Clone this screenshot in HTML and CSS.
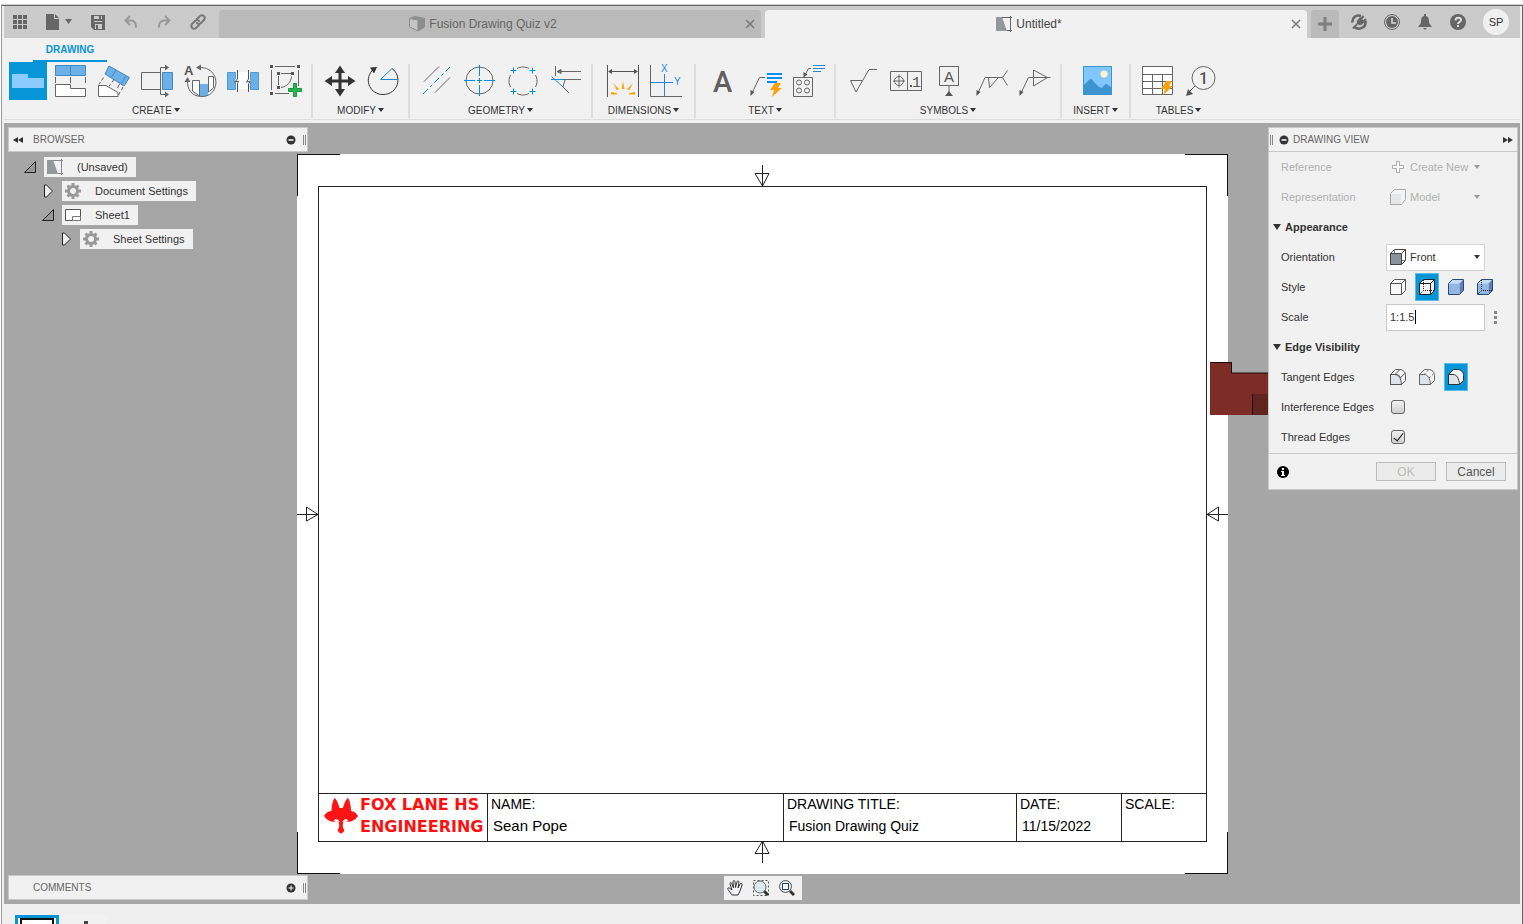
FILE: index.html
```html
<!DOCTYPE html>
<html lang="en">
<head>
    <meta charset="UTF-8">
    <meta name="viewport" content="width=device-width, initial-scale=1.0">
    <title>Untitled*</title>
    <link rel="stylesheet" href="styles.css">
</head>
<body>
<div class="app">

    <header class="title-bar">
        <div class="quick-access">
            <button class="plain" aria-label="Data panel"><svg width="14" height="14" viewBox="0 0 14 14" fill="#666"><path d="M0 0h4v4H0zM5 0h4v4H5zM10 0h4v4h-4zM0 5h4v4H0zM5 5h4v4H5zM10 5h4v4h-4zM0 10h4v4H0zM5 10h4v4H5zM10 10h4v4h-4z"/></svg></button>
            <button class="plain" aria-label="File"><svg width="26" height="16" viewBox="0 0 26 16" fill="#666"><path d="M0 0h8v5h5v11H0zM9 0l4 4H9zM19 5h7l-3.500 5z"/></svg></button>
            <button class="plain" aria-label="Save"><svg width="14" height="15" viewBox="0 0 14 15"><path fill="#666" d="M0 0h14v15H3l-3-3z"/><path fill="#cbcbcb" d="M3 1h8v6H3zM4 9h7v5H4z"/><path fill="#666" d="M8 1h2v3H8zM3 4h8v2H3zM5 10h2v4H5z"/></svg></button>
            <button class="plain" aria-label="Undo"><svg width="14" height="14" viewBox="0 0 14 14" fill="none" stroke="#999" stroke-width="2"><path d="M6 1L1.500 5.500L6 10M2 5.500h5c4 0 5 3 5 7"/></svg></button>
            <button class="plain" aria-label="Redo"><svg width="14" height="14" viewBox="0 0 14 14" fill="none" stroke="#999" stroke-width="2"><path d="M8 1l4.500 4.500L8 10M12 5.500H7c-4 0-5 3-5 7"/></svg></button>
            <button class="plain" aria-label="Link"><svg width="16" height="16" viewBox="0 0 16 16" fill="none" stroke="#777" stroke-width="2" stroke-linecap="round"><path d="M7 5l3-3c3-2 6 1 4 4l-3 3c-1 1-3 1-4 0M9 11l-3 3c-3 2-6-1-4-4l3-3c1-1 3-1 4 0"/></svg></button>
        </div>
        <div class="tabs">
            <div class="tab">
                <svg width="16" height="16" viewBox="0 0 16 16"><path fill="#8d8d8d" d="M0 2L6 0l10 2-6 2z"/><path fill="#c4c4c4" stroke="#8d8d8d" d="M.5 2.500L9 4v11L.500 11z"/><path fill="#8d8d8d" d="M9 4l7-2v9l-7 4.500z"/></svg>
                <span>Fusion Drawing Quiz v2</span>
                <button class="plain close" aria-label="Close tab"><svg width="10" height="10" viewBox="0 0 10 10" stroke="#777" stroke-width="1.500"><path d="M1 1l8 8M9 1l-8 8"/></svg></button>
            </div>
            <div class="tab active">
                <svg width="16" height="16" viewBox="0 0 16 16"><path fill="#94979c" d="M0 1h6l5 14H0z"/><path fill="none" stroke="#666" d="M6 1.500h10M14.500 0v16M11 14.500h5"/></svg>
                <span>Untitled*</span>
                <button class="plain close" aria-label="Close tab"><svg width="10" height="10" viewBox="0 0 10 10" stroke="#777" stroke-width="1.500"><path d="M1 1l8 8M9 1l-8 8"/></svg></button>
            </div>
        </div>
        <div class="account">
            <button class="plain new-tab" aria-label="New tab"><svg width="14" height="14" viewBox="0 0 14 14" stroke="#7e7e7e" stroke-width="3"><path d="M0 7h14M7 0v14"/></svg></button>
            <button class="plain" aria-label="Extensions"><svg width="16" height="16" viewBox="0 0 16 16"><path fill="none" stroke="#666" stroke-width="2.500" d="M10 2C5 0 1 4 1.500 8.500M3.500 13c5 4 12 0 11-6"/><path fill="#666" d="M1 14l5-5 1 1-4 5zM6 7l3-4 5 5-4 3c-2 1-5-2-4-4z"/><path stroke="#666" stroke-width="2" d="M10 5l2.500-3M12 8l3-3"/></svg></button>
            <button class="plain" aria-label="Job status"><svg width="16" height="16" viewBox="0 0 16 16"><circle cx="8" cy="8" r="7.500" fill="none" stroke="#666"/><circle cx="8" cy="8" r="6" fill="#666"/><path d="M8 4v5h4" fill="none" stroke="#ddd" stroke-width="1.500"/></svg></button>
            <button class="plain" aria-label="Notifications"><svg width="16" height="16" viewBox="0 0 16 16" fill="#666"><path d="M7 0h2v2c3 1 3 4 3 6 0 2 2 3 3 5H1c1-2 3-3 3-5 0-2 0-5 3-6zM6 14h4l-2 2z"/></svg></button>
            <button class="plain" aria-label="Help"><svg width="16" height="16" viewBox="0 0 16 16"><circle cx="8" cy="8" r="8" fill="#666"/><path d="M5.500 6.500c0-4 5.500-3.500 5.500-.5 0 2-3 2-3 4M8 11v2" fill="none" stroke="#ddd" stroke-width="2"/></svg></button>
            <button class="plain avatar">SP</button>
        </div>
    </header>

    <nav class="ribbon">
        <a class="ribbon-tab" href="#">DRAWING</a>
        <div class="groups">

            <div class="group">
                <div class="tools">
                    <button class="tool selected" aria-label="Base view"><svg viewBox="0 0 38 38"><path fill="#8ccbff" d="M3 12h16v4h16v10H3z"/></svg></button>
                    <button class="tool" aria-label="Projected view"><svg viewBox="0 0 38 38"><path fill="#6bb1e8" stroke="#4489c0" d="M3.500 3.500h30v10h-30zM18.500 3.500v10"/><path stroke="#666" d="M3.500 15v6M18.500 15v6M33.500 15v6"/><path fill="#fff" stroke="#666" d="M3.500 22.500h15v4h15v8h-30z"/></svg></button>
                    <button class="tool" aria-label="Auxiliary view"><svg viewBox="0 0 38 38"><path fill="#6bb1e8" stroke="#4489c0" d="M14 4l20.500 11.500-5.500 8.500-19-12zM21 8l-5 8M31 14l-5 8"/><path stroke="#666" d="M8.500 15.500l-2 3M5.500 20l-1.500 2.500M19 17l-2 3.500M15.500 22l-1.500 2.500M28 25l-1.500 3M25 30l-1.500 3M24.500 22l-2 4"/><path fill="#fff" stroke="#666" d="M3.500 23.500H11l12 7v4H3.500z"/></svg></button>
                    <button class="tool" aria-label="Section view"><svg viewBox="0 0 38 38"><path fill="#6bb1e8" stroke="#4489c0" d="M24.500 10.500h10v17h-10z"/><path fill="none" stroke="#666" d="M22.500 10.500h-19v17h19M30 5.500h-7.500v27H30"/><path fill="#666" d="M27 2.500l4 3-4 3zM27 29.500l4 3-4 3z"/></svg></button>
                    <button class="tool" aria-label="Detail view"><svg viewBox="0 0 38 38"><path fill="#fff" stroke="#666" d="M11.500 29V18.500h7V34zM27.500 30V14.500h5V26z"/><path fill="#6bb1e8" d="M19 22h8v12h-8z"/><path fill="none" stroke="#666" d="M18 5.500c22-1 22 29 3 29C10 34.500 6 27 6.500 18"/><path fill="#666" d="M20 2.500v6l-5-3zM3.500 20h6l-3-5z"/><text class="svg-bold" x="3" y="13" font-size="13" fill="#555">A</text></svg></button>
                    <button class="tool" aria-label="Break view"><svg viewBox="0 0 38 38"><path fill="#fff" d="M12 10h14v17H12z"/><path fill="#6bb1e8" stroke="#4f9bd5" d="M3.500 10.500h8v6l-2 3 2 1v7h-8zM26.500 10.500h8v17h-8v-7l1.500-2-1.500-1z"/><path fill="none" stroke="#555" d="M13.500 8v9l-3 3 4-1-1 2.500V30M24.500 8v9l-2 3 4-1-2 3v8"/></svg></button>
                    <button class="tool" aria-label="Create sketch"><svg viewBox="0 0 38 38"><path fill="none" stroke="#666" d="M8 4.500h20M4.500 8v20M31.500 8v16M8 31.500h14M14 11.500h10M11.500 14v9M14 25.500c6-1 10-5 10.500-11"/><path fill="#555" d="M3 3h3v3H3zM30 3h3v3h-3zM3 30h3v3H3zM10 10h3v3h-3zM24 10h3v3h-3zM10 24h3v3h-3z"/><path fill="#27b34f" stroke="#159a3c" d="M26.500 21.500h3v5h5v3h-5v5h-3v-5h-5v-3h5z"/></svg></button>
                </div>
                <button class="group-label">CREATE <span class="caret"></span></button>
            </div>

            <div class="group">
                <div class="tools">
                    <button class="tool" aria-label="Move"><svg viewBox="0 0 38 38"><path stroke="#333" stroke-width="3" d="M19 8v22M8 19h22"/><path fill="#333" d="M19 3.500l5 7.500H14zM19 34.500l5-7.500H14zM3.500 19l7.500-5v10zM34.500 19L27 14v10z"/></svg></button>
                    <button class="tool" aria-label="Rotate"><svg viewBox="0 0 38 38"><path fill="none" stroke="#333" d="M8.500 8C-1 19 7 32.500 19 32.500c15 0 20-18 9-26"/><path fill="#333" d="M6 5.500l7-.5-3 6.500z"/><path fill="none" stroke="#1e88d8" d="M28 6.500l-11.500 11h17"/></svg></button>
                </div>
                <button class="group-label">MODIFY <span class="caret"></span></button>
            </div>

            <div class="group">
                <div class="tools">
                    <button class="tool" aria-label="Centerline"><svg viewBox="0 0 38 38" fill="none" stroke="#666"><path d="M6 19.500l15-15M17 30.500l15-15"/><path stroke="#0090e8" stroke-dasharray="7 3 3 3" d="M5 32L32 5"/></svg></button>
                    <button class="tool" aria-label="Center mark"><svg viewBox="0 0 38 38" fill="none" stroke="#666"><circle cx="18.500" cy="18.500" r="13.500"/><path stroke="#0090e8" d="M3 18.500h11M16 18.500h5M23 18.500h11M18.500 3v11M18.500 16v5M18.500 23v11"/></svg></button>
                    <button class="tool" aria-label="Center mark pattern"><svg viewBox="0 0 38 38" fill="none" stroke="#666"><path d="M13 6.500c4-2 8-2 12 0M13 31.500c4 2 8 2 12 0M6.500 13c-2 4-2 8 0 12M31.500 13c2 4 2 8 0 12"/><path stroke="#0090e8" d="M6.500 8.500h6M9.500 5.500v6M25.500 8.500h6M28.500 5.500v6M6.500 29.500h6M9.500 26.500v6M25.500 29.500h6M28.500 26.500v6"/></svg></button>
                    <button class="tool" aria-label="Edge extension"><svg viewBox="0 0 38 38" fill="none" stroke="#666"><path d="M8.500 4v10M10 9.500h24M16 17.500h18M16 25l6 6M18 18l-2 7"/><path fill="#666" d="M10 9.500l4-2v4z"/><path stroke="#1e88d8" d="M4 17.500h13M4.500 14.500L16 25"/></svg></button>
                </div>
                <button class="group-label">GEOMETRY <span class="caret"></span></button>
            </div>

            <div class="group group-dimensions">
                <div class="tools">
                    <button class="tool" aria-label="Dimension"><svg viewBox="0 0 38 38"><path fill="none" stroke="#555" d="M3.500 3v32M34.500 3v32M5 9.500h28"/><path fill="#555" d="M4 9.500l4-2.500v5zM34 9.500l-4-2.500v5z"/><path fill="#fda50f" d="M19 19l1.500 8h-3zM9 21l6 6-2 1.500zM29 21l-6 6 2 1.500zM7 30l6 1v1.500H7zM31 30l-6 1v1.500h6z"/></svg></button>
                    <button class="tool" aria-label="Ordinate dimension"><svg viewBox="0 0 38 38"><path fill="none" stroke="#666" d="M3.500 3v31.500H35"/><path stroke="#1e88d8" d="M17.500 12v22M4 20.500h22"/><text x="14" y="10" font-size="10" fill="#1e88d8">X</text><text x="27" y="23" font-size="10" fill="#1e88d8">Y</text></svg></button>
                </div>
                <button class="group-label">DIMENSIONS <span class="caret"></span></button>
            </div>

            <div class="group">
                <div class="tools">
                    <button class="tool" aria-label="Text"><svg viewBox="0 0 38 38"><text class="svg-medium" x="9" y="30" font-size="29" fill="#606060">A</text></svg></button>
                    <button class="tool" aria-label="Leader note"><svg viewBox="0 0 38 38"><path fill="none" stroke="#666" d="M18 15.500h-5.500L5 31"/><path fill="#555" d="M3.500 34v-6l4 2z"/><path stroke="#0090f0" stroke-width="2" d="M20 12h15M20 16h15M20 20h10"/><path fill="#fba00d" d="M28 21h6l-3 5h4L25 35l2-7h-4z"/></svg></button>
                    <button class="tool" aria-label="Hole and thread note"><svg viewBox="0 0 38 38" fill="none" stroke="#666"><path d="M3.500 15.500h19v19h-19zM21 6.500h-2.500L15 13"/><circle cx="9" cy="20.500" r="2.500"/><circle cx="17" cy="20.500" r="2.500"/><circle cx="9" cy="28.500" r="2.500"/><circle cx="17" cy="28.500" r="2.500"/><path fill="#555" stroke="none" d="M13.500 15.500V10l4 2.500z"/><path stroke="#1e88d8" d="M23 3.500h12M23 6.500h12M23 9.500h8"/></svg></button>
                </div>
                <button class="group-label">TEXT <span class="caret"></span></button>
            </div>

            <div class="group">
                <div class="tools">
                    <button class="tool" aria-label="Surface texture"><svg viewBox="0 0 38 38" fill="none" stroke="#666"><path d="M18 18.500H6.500L12 30 25 7.500h8"/></svg></button>
                    <button class="tool" aria-label="Feature control frame"><svg viewBox="0 0 38 38" fill="none" stroke="#666"><path d="M3.500 9.500h31v19h-31zM20.500 9.500v19M6 19h12M12 12.500v13"/><circle cx="12" cy="19" r="4.500"/><path fill="#555" stroke="none" d="M23 23h2v2h-2z"/><text x="25" y="25" font-size="15" fill="#555" stroke="none" class="svg-mono">1</text></svg></button>
                    <button class="tool" aria-label="Datum identifier"><svg viewBox="0 0 38 38"><path fill="none" stroke="#666" d="M9.500 4.500h19v19h-19zM19 24v6"/><path fill="#555" d="M19 29l4 5h-8z"/><text x="14" y="20" font-size="15" fill="#555">A</text></svg></button>
                    <button class="tool" aria-label="Welding symbol"><svg viewBox="0 0 38 38" fill="none" stroke="#666"><path d="M5 31l7-15.500h17.500l5-7M29.500 15.500l5 8M15.500 15.500l1 10 9-10"/><path fill="#555" stroke="none" d="M3.500 34v-6l4 2z"/></svg></button>
                    <button class="tool" aria-label="Taper symbol"><svg viewBox="0 0 38 38" fill="none" stroke="#666"><path d="M5 31l7.500-15.500h22M17.500 8v16l14-8.500z"/><path fill="#555" stroke="none" d="M3.500 34v-6l4 2z"/></svg></button>
                </div>
                <button class="group-label">SYMBOLS <span class="caret"></span></button>
            </div>

            <div class="group group-insert">
                <div class="tools">
                    <button class="tool" aria-label="Insert image"><svg viewBox="0 0 38 38"><path fill="#80c7ff" d="M5 4h29v29H5z"/><path fill="#3d94cf" d="M5 24l6-6c2-2 3-1 5 2l5 5 3 1c3-4 4-5 6-3l4 3v7H5z"/><circle cx="26" cy="12" r="3.500" fill="#fdf6c8"/><path fill="none" stroke="#3d94cf" d="M5.500 4.500h28v28h-28z"/></svg></button>
                </div>
                <button class="group-label">INSERT <span class="caret"></span></button>
            </div>

            <div class="group">
                <div class="tools">
                    <button class="tool" aria-label="Table"><svg viewBox="0 0 38 38"><path fill="#fff" stroke="#666" d="M3.500 4.500h30v28h-30zM3.500 12.500h30M3.500 19.500h30M3.500 26.500h30M13.500 12v20M23.500 12v20"/><path fill="#fba00d" d="M27 19h6l-3 5h4L24 33l2-6h-4z"/></svg></button>
                    <button class="tool" aria-label="Balloon"><svg viewBox="0 0 38 38"><circle cx="21.500" cy="16" r="11.500" fill="none" stroke="#666"/><path stroke="#666" d="M13 24l-6 6"/><path fill="#555" d="M4 34l2-7 5 5z"/><text class="svg-medium" x="17" y="22" font-size="16" fill="#555">1</text></svg></button>
                </div>
                <button class="group-label">TABLES <span class="caret"></span></button>
            </div>
        </div>
    </nav>

    <main class="workspace">

        <aside class="sidebar">
            <section class="browser">
                <div class="panel-bar">
                    <svg width="10" height="8" viewBox="0 0 10 8" fill="#333"><path d="M5 1v6L0 4zM10 1v6L5 4z"/></svg>
                    <h2>BROWSER</h2>
                    <button class="plain" aria-label="Collapse"><svg width="10" height="10" viewBox="0 0 10 10"><circle cx="5" cy="5" r="4.500" fill="#333"/><path stroke="#fff" stroke-width="1.500" d="M2.500 5h5"/></svg></button>
                    <span class="grip"></span>
                </div>
                <ul class="tree">
                    <li>
                        <svg class="twist" viewBox="0 0 12 12"><path fill="#999" stroke="#222" d="M.5 11.500h11v-11z"/></svg>
                        <a class="node" href="#"><svg width="16" height="16" viewBox="0 0 16 16"><path fill="#94979c" d="M0 1h6l5 14H0z"/><path fill="none" stroke="#888" d="M6 1.500h10M14.500 0v16M11 14.500h5"/></svg><span>(Unsaved)</span></a>
                    </li>
                    <li class="level-2">
                        <svg class="twist" viewBox="0 0 12 12"><path fill="#eee" stroke="#222" d="M2.500 0v12h2l5.500-5.500v-1L4.500 0z"/></svg>
                        <a class="node" href="#"><svg width="16" height="16" viewBox="0 0 16 16"><circle cx="8" cy="8" r="4.500" fill="none" stroke="#999" stroke-width="3"/><path stroke="#999" stroke-width="3" d="M8 0v3M8 13v3M0 8h3M13 8h3M2.500 2.500l2 2M11.500 11.500l2 2M2.500 13.500l2-2M11.500 4.500l2-2"/></svg><span>Document Settings</span></a>
                    </li>
                    <li class="level-2">
                        <svg class="twist" viewBox="0 0 12 12"><path fill="#999" stroke="#222" d="M.5 11.500h11v-11z"/></svg>
                        <a class="node" href="#"><svg width="16" height="16" viewBox="0 0 16 16"><path fill="#fff" stroke="#555" d="M.5 2.500h15v11H.5z"/><path fill="#fff" stroke="#777" d="M7.500 9.500h8v4h-8z"/></svg><span>Sheet1</span></a>
                    </li>
                    <li class="level-3">
                        <svg class="twist" viewBox="0 0 12 12"><path fill="#eee" stroke="#222" d="M2.500 0v12h2l5.500-5.500v-1L4.500 0z"/></svg>
                        <a class="node" href="#"><svg width="16" height="16" viewBox="0 0 16 16"><circle cx="8" cy="8" r="4.500" fill="none" stroke="#999" stroke-width="3"/><path stroke="#999" stroke-width="3" d="M8 0v3M8 13v3M0 8h3M13 8h3M2.500 2.500l2 2M11.500 11.500l2 2M2.500 13.500l2-2M11.500 4.500l2-2"/></svg><span>Sheet Settings</span></a>
                    </li>
                </ul>
            </section>
            <section class="comments">
                <div class="panel-bar">
                    <h2 class="no-arrow">COMMENTS</h2>
                    <button class="plain" aria-label="Expand"><svg width="10" height="10" viewBox="0 0 10 10"><circle cx="5" cy="5" r="4.500" fill="#333"/><path stroke="#fff" d="M2.500 5h5M5 2.500v5"/></svg></button>
                    <span class="grip"></span>
                </div>
            </section>
        </aside>

        <div class="sheet">
            <span class="corner top-left"></span>
            <span class="corner top-right"></span>
            <span class="corner bottom-left"></span>
            <span class="corner bottom-right"></span>
            <svg class="mark mark-top" width="16" height="22" viewBox="0 0 16 22"><path d="M8.500 0v22M1 8.500h14L8.500 21z"/></svg>
            <svg class="mark mark-bottom" width="16" height="22" viewBox="0 0 16 22"><path d="M8.500 0v22M1 12.500h14L8.500 0z"/></svg>
            <svg class="mark mark-left" width="22" height="16" viewBox="0 0 22 16"><path d="M0 8.500h22M9.500 1v14L21 8.500z"/></svg>
            <svg class="mark mark-right" width="22" height="16" viewBox="0 0 22 16"><path d="M0 8.500h22M12.500 1v14L1 8.500z"/></svg>

            <div class="frame">
                <div class="drawing-area"></div>
                <div class="title-block">
                    <div class="logo">
                        <svg width="34" height="38" viewBox="0 0 34 38"><path fill="#fd1414" d="M10.500 1c2 1 4 6 5 10h3.500c1-4 3-9 5-10 2 3 3 8 3 13 3 0 6 3 7 5-3 5-9 7-14 5-1 1-1.500 3-1 7a3 3 0 1 1-4 0c.5-4 0-6-1-7-5 2-11 0-14-5 1-2 4-5 7.500-5 0-5 1-10 3-13z"/><path fill="#fff" d="M11 22c2 0 4 1 5 3-2-1-4 0-6-1zM23 22c-2 0-4 1-5 3 2-1 4 0 6-1z"/></svg>
                        <div class="logo-text">FOX LANE HS<br>ENGINEERING</div>
                    </div>
                    <div class="cell"><span>NAME:</span><span class="value name-value">Sean Pope</span></div>
                    <div class="cell"><span>DRAWING TITLE:</span><span class="value">Fusion Drawing Quiz</span></div>
                    <div class="cell"><span>DATE:</span><span class="value">11/15/2022</span></div>
                    <div class="cell"><span>SCALE:</span></div>
                </div>
            </div>

            <svg class="model" width="58" height="53" viewBox="0 0 58 53"><path fill="#7d2d28" d="M0 0h22v11h36v42H0z"/><path fill="#61241f" d="M42 32h16v21H42z"/><path fill="none" stroke="#1c0b0a" d="M0 .5h21.500v10.500H58M42.500 53V32"/></svg>
        </div>

        <aside class="side-right">
            <form class="dialog">
                <div class="dialog-bar">
                    <span class="grip"></span>
                    <svg width="10" height="10" viewBox="0 0 10 10"><circle cx="5" cy="5" r="4.500" fill="#333"/><path stroke="#fff" stroke-width="1.500" d="M2.500 5h5"/></svg>
                    <h2>DRAWING VIEW</h2>
                    <svg width="10" height="8" viewBox="0 0 10 8" fill="#333"><path d="M0 1v6l5-3zM5 1v6l5-3z"/></svg>
                </div>

                <div class="row disabled">
                    <label for="reference">Reference</label>
                    <div class="drop">
                        <svg class="drop-icon" viewBox="0 0 18 18"><path fill="#fff" stroke="#aaa" d="M7.500 3.500h3v4h4v3h-4v4h-3v-4h-4v-3h4z"/></svg>
                        <select id="reference" disabled><option>Create New</option></select><span class="caret"></span>
                    </div>
                </div>
                <div class="row disabled">
                    <label for="representation">Representation</label>
                    <div class="drop">
                        <svg class="drop-icon" viewBox="0 0 18 18"><path fill="#f4f4f4" stroke="#aaa" d="M1.500 5.500l4-4h11v10l-4 5h-11z"/><path fill="#e4e6e8" d="M2 6h10v10H2z"/></svg>
                        <select id="representation" disabled><option>Model</option></select><span class="caret"></span>
                    </div>
                </div>

                <h3 class="row"><span class="fold"></span>Appearance</h3>
                <div class="row">
                    <label for="orientation">Orientation</label>
                    <div class="drop boxed">
                        <svg class="drop-icon" viewBox="0 0 18 18"><path fill="#fff" stroke="#444" d="M1.500 5.500l4-4h11v11l-4 4h-11z"/><path fill="none" stroke="#777" d="M5.500 1.500v11h11"/><path fill="#8c929b" stroke="#444" d="M1.500 5.500h11v11h-11z"/><path stroke="#444" d="M12.500 5.500l4-4"/></svg>
                        <select id="orientation"><option>Front</option></select><span class="caret"></span>
                    </div>
                </div>
                <div class="row">
                    <span class="row-label">Style</span>
                    <div class="choices">
                        <button type="button" class="choice" aria-label="Visible edges"><svg viewBox="0 0 18 18" stroke="#555" fill="#f8f8f8"><path d="M1.500 5.500l4-4h11v11l-4 4h-11zM1.500 5.500h11v11M12.500 5.500l4-4"/></svg></button>
                        <button type="button" class="choice on" aria-label="Visible and hidden edges"><svg viewBox="0 0 18 18" stroke="#222" fill="#f1f1f1"><path d="M1.500 5.500l4-4h11v11l-4 4h-11zM1.500 5.500h11v11M12.500 5.500l4-4"/><path fill="none" stroke-dasharray="1 1" d="M5.500 2v10.500H16M5.500 12.500l-4 4"/></svg></button>
                        <button type="button" class="choice" aria-label="Shaded"><svg viewBox="0 0 18 18" stroke="#2b4875"><path fill="#c3dcf5" stroke="none" d="M1.500 5.500l4-4h11l-4 4z"/><path fill="#93b7e2" stroke="none" d="M1.500 5.500h11v11h-11z"/><path fill="#5f80b8" stroke="none" d="M12.500 5.500l4-4v11l-4 4z"/><path fill="none" d="M1.500 5.500l4-4h11v11l-4 4h-11z"/></svg></button>
                        <button type="button" class="choice" aria-label="Shaded with hidden edges"><svg viewBox="0 0 18 18" stroke="#2b4875"><path fill="#c3dcf5" stroke="none" d="M1.500 5.500l4-4h11l-4 4z"/><path fill="#93b7e2" stroke="none" d="M1.500 5.500h11v11h-11z"/><path fill="#5f80b8" stroke="none" d="M12.500 5.500l4-4v11l-4 4z"/><path fill="none" d="M1.500 5.500l4-4h11v11l-4 4h-11z"/><path fill="none" stroke="#111" stroke-dasharray="1 1" d="M5.500 2v10.500H16M5.500 12.500l-4 4"/></svg></button>
                    </div>
                </div>
                <div class="row">
                    <label for="scale">Scale</label>
                    <div class="scale-field"><input id="scale" type="text" value="1:1.5"><span class="text-caret"></span></div>
                    <button type="button" class="plain more" aria-label="Scale options"><svg width="3" height="13" viewBox="0 0 3 13" fill="#888"><path d="M0 0h3v3H0zM0 5h3v3H0zM0 10h3v3H0z"/></svg></button>
                </div>

                <h3 class="row"><span class="fold"></span>Edge Visibility</h3>
                <div class="row">
                    <span class="row-label">Tangent Edges</span>
                    <div class="choices">
                        <button type="button" class="choice" aria-label="Full length"><svg viewBox="0 0 18 18" stroke="#555"><path fill="#f4f4f4" d="M1.500 6.500l5-5h4c4 0 6 3 6 6v5l-4 4h-11z"/><path fill="#dfe3ea" d="M1.500 6.500H6c4 0 6 4 6.500 10h-11z"/><path fill="none" d="M6 6.500l5-5M11 10l5.500-5M6 6.500c3 0 5 1 6 4"/></svg></button>
                        <button type="button" class="choice" aria-label="Shortened"><svg viewBox="0 0 18 18" stroke="#666"><path fill="#f4f4f4" d="M1.500 6.500l5-5h4c4 0 6 3 6 6v5l-4 4h-11z"/><path fill="#dfe3ea" d="M1.500 6.500H6c4 0 6 4 6.500 10h-11z"/><path fill="none" stroke-dasharray="2 2" d="M6 6.500l5-5M11 10l5.500-5"/></svg></button>
                        <button type="button" class="choice on" aria-label="Off"><svg viewBox="0 0 18 18" stroke="#333"><path fill="#f6f6f6" d="M1.500 6.500l5-5h4c4 0 6 3 6 6v5l-4 4h-11z"/><path fill="#dfe3ea" d="M1.500 6.500H6c4 0 6 4 6.500 10h-11z"/></svg></button>
                    </div>
                </div>
                <div class="row">
                    <label for="interference">Interference Edges</label>
                    <input id="interference" type="checkbox">
                </div>
                <div class="row">
                    <label for="thread">Thread Edges</label>
                    <input id="thread" type="checkbox" checked>
                </div>

                <div class="dialog-footer">
                    <svg width="12" height="12" viewBox="0 0 12 12"><circle cx="6" cy="6" r="6" fill="#000"/><path fill="#fff" d="M5 2h2v2H5zM4 5h3v4h1v1H4V9h1V6H4z"/></svg>
                    <button type="button" class="action" disabled>OK</button>
                    <button type="button" class="action">Cancel</button>
                </div>
            </form>
        </aside>

        <div class="nav-bar">
            <button class="plain" aria-label="Pan"><svg width="16" height="16" viewBox="0 0 16 16"><path fill="#f5f6fb" stroke="#333" d="M5 15L1 9.500c-1-2 1-2 2-1L5 10 3 4c0-2 1.500-2 2 0l1.500 4L6 2c0-2 2-2 2 0l.5 5.500L10 2c.5-2 2-1 2 0l-1 6 2-4c1-1 2.500-.5 2 1l-2 6-2 4z"/></svg></button>
            <button class="plain" aria-label="Zoom window"><svg width="16" height="16" viewBox="0 0 16 16"><path fill="none" stroke="#555" stroke-dasharray="2 2" d="M.5.5h15v15H.500z"/><path stroke="#333" stroke-width="3" d="M11 11l4 4"/><circle cx="7" cy="7" r="6" fill="#dceaec" stroke="#666"/></svg></button>
            <button class="plain" aria-label="Fit"><svg width="16" height="16" viewBox="0 0 16 16"><path stroke="#333" stroke-width="3" d="M11 11l4 4"/><circle cx="6.500" cy="6.500" r="6" fill="#dceaec" stroke="#555"/><path fill="#f5f5f5" stroke="#345" d="M3.500 3.500h6v6h-6z"/></svg></button>
        </div>
    </main>

    <footer class="sheet-strip">
        <button class="thumb" aria-label="Sheet1"><span></span></button>
        <button class="add-sheet" aria-label="Add sheet"><svg width="12" height="12" viewBox="0 0 12 12" stroke="#444" stroke-width="4"><path d="M6 0v12M0 6h12"/></svg></button>
    </footer>
</div>
</body>
</html>
```
FILE: styles.css
```css
* {
    box-sizing: border-box;
    margin: 0;
    padding: 0;
}
body {
    background-color: #fff;
    font-family: "Liberation Sans", Arial, sans-serif;
    font-size: 11px;
    color: #333;
}
button, input, select {
    font: inherit;
    color: inherit;
}
a {
    color: inherit;
    text-decoration: none;
}
svg {
    display: block;
    flex: none;
}
.app {
    display: flex;
    flex-direction: column;
    height: calc(100vh - 5px);
    margin: 5px 0 0 1px;
    padding: 0 2px;
    border: 1px solid #666;
    border-left-color: #999;
    border-bottom: none;
    background-color: #f0f0f0;
    box-shadow: 0 -1px #ccc;
    overflow: hidden;
}
.plain {
    border: none;
    background: none;
}

/* title bar */
.title-bar {
    display: flex;
    height: 32px;
    background-color: #cbcbcb;
}
.quick-access {
    display: flex;
    align-items: center;
    gap: 19px;
    width: 215px;
    padding-left: 9px;
}
.tabs {
    display: flex;
    flex: 1;
    gap: 4px;
    padding-top: 4px;
}
.tab {
    display: flex;
    flex: 1;
    align-items: center;
    justify-content: center;
    gap: 4px;
    position: relative;
    padding-right: 14px;
    border-radius: 4px 4px 0 0;
    background-color: #bababa;
    color: #666;
    font-size: 12px;
}
.tab.active {
    background-color: #f1f1f1;
    color: #444;
}
.close {
    position: absolute;
    right: 6px;
}
.account {
    display: flex;
    align-items: center;
    gap: 17px;
    width: 213px;
    padding-left: 4px;
}
.new-tab {
    display: flex;
    align-items: center;
    justify-content: center;
    align-self: flex-end;
    width: 28px;
    height: 28px;
    margin-right: -5px;
    border-radius: 4px 4px 0 0;
    background-color: #bababa;
}
.avatar {
    width: 26px;
    height: 26px;
    border-radius: 50%;
    background-color: #f0f0f0;
}

/* ribbon */
.ribbon {
    height: 85px;
    background-color: #f1f1f1;
    box-shadow: inset 0 -3px #f1f1f1, inset 0 -4px #ddd;
}
.ribbon-tab {
    display: block;
    width: 74px;
    height: 24px;
    margin-left: 29px;
    border-bottom: 2px solid #0696d7;
    color: #0696d7;
    font-size: 10px;
    font-weight: bold;
    line-height: 24px;
    text-align: center;
}
.groups {
    display: flex;
}
.group {
    position: relative;
    padding: 0 6px 0 8px;
    border-right: 2px solid transparent;
}
.group:first-child {
    padding-left: 5px;
}
.group:not(:last-child)::after {
    content: "";
    position: absolute;
    top: 2px;
    right: -2px;
    bottom: 0;
    width: 2px;
    background-color: #ddd;
}
.group-dimensions {
    padding: 0 9px 0 11px;
}
.group-insert {
    width: 69px;
}
.tools {
    display: flex;
    justify-content: center;
    gap: 5px;
}
.tool {
    width: 38px;
    height: 38px;
    border: none;
    background: none;
}
.tool.selected {
    background-color: #0696d7;
}
.tool text {
    font-family: "Liberation Sans", Arial, sans-serif;
}
.tool .svg-bold {
    font-weight: bold;
}
.tool .svg-medium {
    font-family: Roboto, sans-serif;
    font-weight: 500;
}
.tool .svg-mono {
    font-family: "Liberation Mono", monospace;
}
.group-label {
    display: flex;
    align-items: center;
    justify-content: center;
    gap: 2px;
    width: 100%;
    height: 16px;
    margin-top: 2px;
    padding-right: 2px;
    border: none;
    background: none;
    font-size: 10px;
    white-space: nowrap;
}
.caret {
    border: 3px solid transparent;
    border-top: 4px solid currentColor;
    border-bottom: none;
}

/* workspace: sidebar, sheet, dialog */
.workspace {
    display: grid;
    grid-template-columns: 293px 1fr 292px;
    flex: 1;
    position: relative;
    background-color: #a6a6a6;
}
.sidebar {
    display: flex;
    flex-direction: column;
    justify-content: space-between;
    z-index: 1;
    padding: 4px;
}
.panel-bar {
    display: flex;
    align-items: center;
    width: 300px;
    height: 25px;
    padding: 0 1px 0 4px;
    border: 1px solid #c8c8c8;
    background-color: #f1f1f1;
}
h2 {
    color: #666;
    font-size: 10px;
    font-weight: normal;
}
.panel-bar h2 {
    flex: 1;
    margin-left: 10px;
}
.panel-bar .no-arrow {
    margin-left: 20px;
}
.grip {
    width: 3px;
    height: 10px;
    margin-left: 7px;
    border: 1px solid #888;
    border-width: 0 1px;
}
.tree {
    display: flex;
    flex-direction: column;
    gap: 4px;
    padding: 5px 0 0 16px;
    list-style: none;
}
.tree li {
    display: flex;
    align-items: center;
    gap: 8px;
}
.tree .level-2 {
    padding-left: 18px;
}
.tree .level-3 {
    padding-left: 36px;
}
.twist {
    width: 12px;
    height: 12px;
    overflow: visible;
}
.node {
    display: flex;
    align-items: center;
    gap: 14px;
    height: 20px;
    padding: 0 8px 0 3px;
    background-color: #f1f1f1;
}

.sheet {
    display: flex;
    position: relative;
    margin: 31px 0 30px;
    padding: 32px 21px;
    background-color: #fff;
}
.corner {
    position: absolute;
    width: 43px;
    height: 42px;
    border: 0 solid #111;
}
.top-left {
    top: 0;
    left: 0;
    border-width: 1px 0 0 1px;
}
.top-right {
    top: 0;
    right: 0;
    border-width: 1px 1px 0 0;
}
.bottom-left {
    bottom: 0;
    left: 0;
    border-width: 0 0 1px 1px;
}
.bottom-right {
    right: 0;
    bottom: 0;
    border-width: 0 1px 1px 0;
}
.mark {
    position: absolute;
    fill: none;
    stroke: #222;
}
.mark-top {
    top: 11px;
    left: calc(50% - 9px);
}
.mark-bottom {
    bottom: 11px;
    left: calc(50% - 9px);
}
.mark-left {
    top: calc(50% - 8px);
    left: 0;
}
.mark-right {
    top: calc(50% - 8px);
    right: 0;
}
.frame {
    display: flex;
    flex: 1;
    flex-direction: column;
    border: 1px solid #222;
}
.drawing-area {
    flex: 1;
}
.title-block {
    display: grid;
    grid-template-columns: 168px 296fr 233fr 105fr 85fr;
    height: 48px;
    border-top: 1px solid #222;
    color: #000;
    font-size: 14px;
}
.logo {
    display: flex;
    align-items: center;
    gap: 2px;
    padding: 0 0 3px 5px;
}
.logo-text {
    color: #fd1010;
    font-family: "DejaVu Sans", sans-serif;
    font-size: 16px;
    font-weight: bold;
    line-height: 22px;
    white-space: nowrap;
}
.cell {
    display: flex;
    flex-direction: column;
    gap: 2px;
    padding-left: 3px;
    border-left: 1px solid #222;
    line-height: 20px;
    white-space: nowrap;
}
.value {
    padding-left: 2px;
}
.name-value {
    font-size: 15px;
}
.model {
    position: absolute;
    top: 208px;
    right: -40px;
}

/* drawing view dialog */
.side-right {
    display: flex;
    align-items: flex-start;
    justify-content: flex-end;
    z-index: 1;
    padding: 4px 2px;
}
.dialog {
    width: 250px;
    border: 1px solid #c8c8c8;
    background-color: #f1f1f1;
}
.dialog-bar {
    display: flex;
    align-items: center;
    gap: 4px;
    height: 24px;
    padding: 0 4px 0 1px;
    border-bottom: 1px solid #c8c8c8;
}
.dialog-bar .grip {
    margin: 0 2px 0 0;
}
.dialog-bar h2 {
    flex: 1;
}
.row {
    display: flex;
    align-items: center;
    height: 30px;
    padding-left: 12px;
}
.row label, .row-label {
    width: 105px;
}
h3.row {
    gap: 4px;
    padding-left: 4px;
    font-size: 11px;
}
.fold {
    border: 4px solid transparent;
    border-top: 6px solid #333;
    border-bottom: none;
}
.disabled {
    color: #b0b0b0;
}
.drop {
    display: flex;
    align-items: center;
    position: relative;
    width: 99px;
    height: 27px;
}
.drop select {
    width: 100%;
    height: 100%;
    padding-left: 24px;
    border: none;
    background: none;
    appearance: none;
    opacity: 1;
}
.drop.boxed {
    outline: 1px solid #d4d4d4;
    outline-offset: -1px;
    background-color: #fff;
}
.drop-icon {
    position: absolute;
    left: 3px;
    width: 18px;
    height: 18px;
}
.drop .caret {
    position: absolute;
    right: 5px;
}
.disabled .caret {
    color: #999;
}
.choices {
    display: flex;
    gap: 5px;
}
.choice {
    display: flex;
    align-items: center;
    justify-content: center;
    width: 24px;
    height: 28px;
    border: 1px solid transparent;
    background: none;
}
.choice svg {
    width: 18px;
    height: 18px;
}
.choice.on {
    border-color: #5db9ea;
    background-color: #0696d7;
}
.scale-field {
    position: relative;
    width: 99px;
}
.scale-field input {
    width: 100%;
    height: 27px;
    padding-left: 3px;
    border: 1px solid #c8c8c8;
    background-color: #fff;
}
.text-caret {
    position: absolute;
    top: 6px;
    left: 29px;
    width: 1px;
    height: 14px;
    background-color: #000;
}
.more {
    margin-left: 9px;
}
input[type="checkbox"] {
    width: 14px;
    height: 14px;
    margin-left: 5px;
    border: 1px solid #666;
    border-radius: 3px;
    background: linear-gradient(#f2f2f2, #cfcfcf);
    appearance: none;
}
input[type="checkbox"]:checked::before {
    content: "";
    display: block;
    width: 4px;
    height: 9px;
    margin: 0 0 0 4px;
    border: solid #111;
    border-width: 0 1px 1px 0;
    transform: rotate(38deg);
}
.dialog-footer {
    display: flex;
    align-items: center;
    gap: 10px;
    height: 36px;
    margin-top: 1px;
    padding: 0 11px 0 8px;
    border-top: 1px solid #c8c8c8;
}
.dialog-footer svg {
    margin-right: auto;
}
.action {
    width: 60px;
    height: 19px;
    border: 1px solid #bbb;
    background-color: #ebebeb;
    color: #555;
    font-size: 12px;
}
.action:disabled {
    color: #bbb;
}

.nav-bar {
    display: flex;
    align-items: center;
    justify-content: center;
    gap: 10px;
    position: absolute;
    bottom: 4px;
    left: calc(50% - 38px);
    width: 78px;
    height: 24px;
    padding-right: 4px;
    background-color: #f1f1f1;
}

/* sheet thumbnails */
.sheet-strip {
    display: flex;
    gap: 5px;
    height: 20px;
    padding: 11px 11px 0;
    background-color: #efefef;
    overflow: hidden;
}
.thumb {
    width: 44px;
    height: 36px;
    padding: 0 2px;
    border: 3px solid #0696d7;
    background-color: #fff;
}
.thumb span {
    display: block;
    height: 100%;
    border: 2px solid #111;
}
.add-sheet {
    display: flex;
    justify-content: center;
    width: 43px;
    height: 36px;
    padding-top: 6px;
    border: none;
    background-color: #f1f1f1;
}
```
